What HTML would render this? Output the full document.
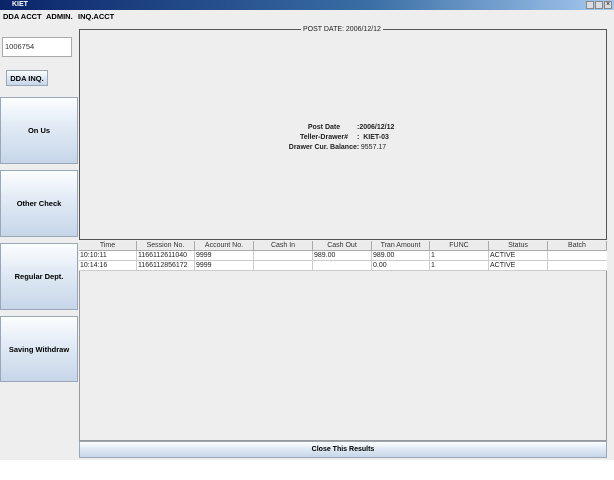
<!DOCTYPE html>
<html><head><style>
*{box-sizing:border-box;margin:0;padding:0}
body{width:614px;height:480px;background:#fff;font-family:"Liberation Sans",sans-serif;font-size:8px;color:#000;position:relative;overflow:hidden}
.a{position:absolute}
.title{left:0;top:0;width:614px;height:10px;background:linear-gradient(90deg,#0a246a,#3a6ea5 60%,#a6caf0);color:#fff;font-weight:bold;font-size:7px;line-height:10px;padding-left:12px}
.win{left:0;top:10px;width:614px;height:450px;background:#eeeeee}
.menu{top:10px;left:0;height:13px;line-height:13px;font-weight:bold;font-size:7.5px}
.btn{border:1px solid #9aa7b8;background:linear-gradient(#fdfeff,#e3ecf6 40%,#c6d6e8);font-weight:bold;font-size:7.5px;display:flex;align-items:center;justify-content:center}
.col{position:absolute;top:0;height:10px;border-right:1px solid #aaa;text-align:center;color:#333}
.cell{position:absolute;height:9px;border-right:1px solid #ccc;padding-left:1px;color:#222;line-height:9px}
</style></head><body>
<div class="a title">KIET</div>
<div class="a" style="left:586px;top:1px;width:8px;height:8px;background:#ddd;border:1px solid #888"></div>
<div class="a" style="left:595px;top:1px;width:8px;height:8px;background:#ddd;border:1px solid #888"></div>
<div class="a" style="left:604px;top:1px;width:8px;height:8px;background:#ddd;border:1px solid #888;font-size:7px;line-height:6px;text-align:center">×</div>
<div class="a win"></div>
<div class="a menu" style="left:3px">DDA ACCT</div>
<div class="a menu" style="left:46px">ADMIN.</div>
<div class="a menu" style="left:78px">INQ.ACCT</div>
<div class="a" style="left:2px;top:37px;width:70px;height:20px;background:#fff;border:1px solid #aaa;line-height:18px;padding-left:2px;font-size:7.5px;color:#333">1006754</div>
<div class="a btn" style="left:6px;top:70px;width:42px;height:16px">DDA INQ.</div>
<div class="a btn" style="left:0;top:97px;width:78px;height:67px">On Us</div>
<div class="a btn" style="left:0;top:170px;width:78px;height:67px">Other Check</div>
<div class="a btn" style="left:0;top:243px;width:78px;height:67px">Regular Dept.</div>
<div class="a btn" style="left:0;top:316px;width:78px;height:66px">Saving Withdraw</div>
<div class="a" style="left:79px;top:29px;width:528px;height:211px;border:1px solid #555"></div>
<div class="a" style="left:301px;top:26px;background:#eee;padding:0 2px;font-size:7px;line-height:8px;color:#222">POST DATE: 2006/12/12</div>
<div class="a" style="left:284px;top:123px;width:80px;text-align:center;font-weight:bold;font-size:7px;line-height:10px;color:#222">Post Date<br>Teller-Drawer#<br>Drawer Cur. Balance:</div>
<div class="a" style="left:357px;top:123px;font-size:7px;line-height:10px;color:#222"><b>:2006/12/12</b><br><b>:&nbsp; KIET-03</b><br>&nbsp;&nbsp;9557.17</div>
<div class="a" style="left:79px;top:241px;width:528px;height:200px;border:1px solid #999;background:#eeeeee"></div>
<div class="a" style="left:79px;top:241px;width:528px;height:10px;background:#ececec;border-bottom:1px solid #aaa;font-size:7px;line-height:10px">
<div class="col" style="left:0;width:58px">Time</div><div class="col" style="left:58px;width:58px">Session No.</div><div class="col" style="left:116px;width:59px">Account No.</div><div class="col" style="left:175px;width:59px">Cash In</div><div class="col" style="left:234px;width:59px">Cash Out</div><div class="col" style="left:293px;width:58px">Tran Amount</div><div class="col" style="left:351px;width:59px">FUNC</div><div class="col" style="left:410px;width:59px">Status</div><div class="col" style="left:469px;width:59px">Batch</div></div>
<div class="a" style="left:79px;top:251px;width:528px;height:19px;background:#fff;font-size:7px">
<div class="cell" style="top:0;left:0;width:58px">10:10:11</div><div class="cell" style="top:0;left:58px;width:58px">1166112611040</div><div class="cell" style="top:0;left:116px;width:59px">9999</div><div class="cell" style="top:0;left:175px;width:59px"></div><div class="cell" style="top:0;left:234px;width:59px">989.00</div><div class="cell" style="top:0;left:293px;width:58px">989.00</div><div class="cell" style="top:0;left:351px;width:59px">1</div><div class="cell" style="top:0;left:410px;width:59px">ACTIVE</div>
<div class="a" style="top:9px;left:0;width:528px;border-top:1px solid #ccc"></div>
<div class="cell" style="top:10px;left:0;width:58px">10:14:16</div><div class="cell" style="top:10px;left:58px;width:58px">1166112856172</div><div class="cell" style="top:10px;left:116px;width:59px">9999</div><div class="cell" style="top:10px;left:175px;width:59px"></div><div class="cell" style="top:10px;left:234px;width:59px"></div><div class="cell" style="top:10px;left:293px;width:58px">0.00</div><div class="cell" style="top:10px;left:351px;width:59px">1</div><div class="cell" style="top:10px;left:410px;width:59px">ACTIVE</div>
<div class="a" style="top:19px;left:0;width:528px;border-top:1px solid #ccc"></div></div>
<div class="a btn" style="left:79px;top:441px;width:528px;height:17px;font-size:7px">Close This Results</div>
</body></html>
